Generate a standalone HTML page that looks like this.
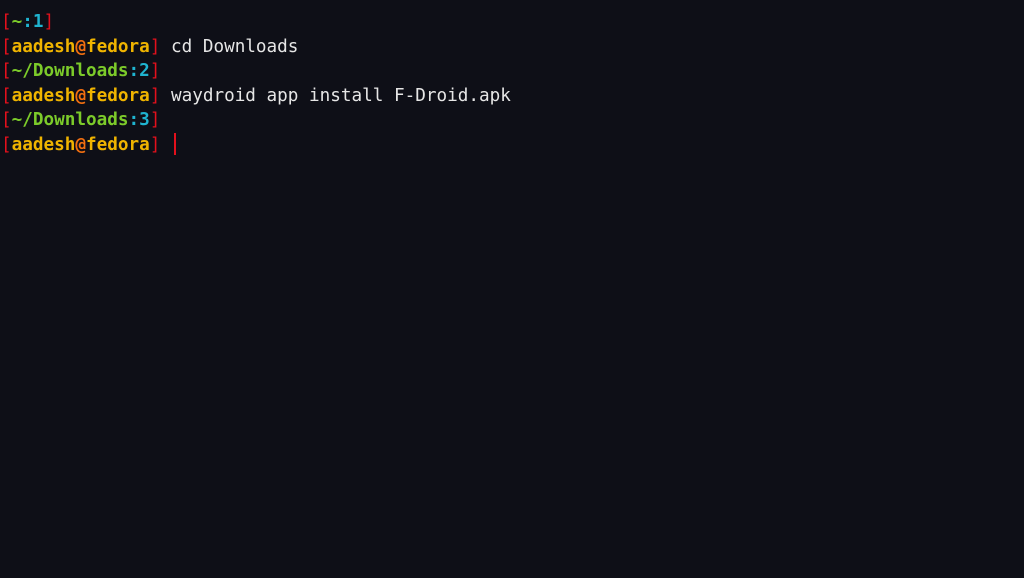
<!DOCTYPE html>
<html><head><style>
html,body{margin:0;padding:0;width:1024px;height:578px;background:#0e0f17;overflow:hidden}
pre{margin:0;position:absolute;left:1px;top:10px;font-family:"DejaVu Sans Mono","Liberation Mono",monospace;font-size:17.65px;line-height:24.5px;color:#e6e6e6}
.r{color:#e3101c}.c{color:#1fb4d0;font-weight:bold}.g{color:#7ccb2a;font-weight:bold}.y{color:#f0b400;font-weight:bold}.o{color:#f26f10;font-weight:bold}
.cur{display:inline-block;width:2px;height:22px;background:#e3101c;vertical-align:-5px;margin-left:3px}
</style></head><body>
<pre><span class="r">[</span><span class="g">~</span><span class="c">:1</span><span class="r">]</span>
<span class="r">[</span><span class="y">aadesh</span><span class="o">@</span><span class="y">fedora</span><span class="r">]</span> cd Downloads
<span class="r">[</span><span class="g">~/Downloads</span><span class="c">:2</span><span class="r">]</span>
<span class="r">[</span><span class="y">aadesh</span><span class="o">@</span><span class="y">fedora</span><span class="r">]</span> waydroid app install F-Droid.apk
<span class="r">[</span><span class="g">~/Downloads</span><span class="c">:3</span><span class="r">]</span>
<span class="r">[</span><span class="y">aadesh</span><span class="o">@</span><span class="y">fedora</span><span class="r">]</span> <span class="cur"></span></pre>
</body></html>
